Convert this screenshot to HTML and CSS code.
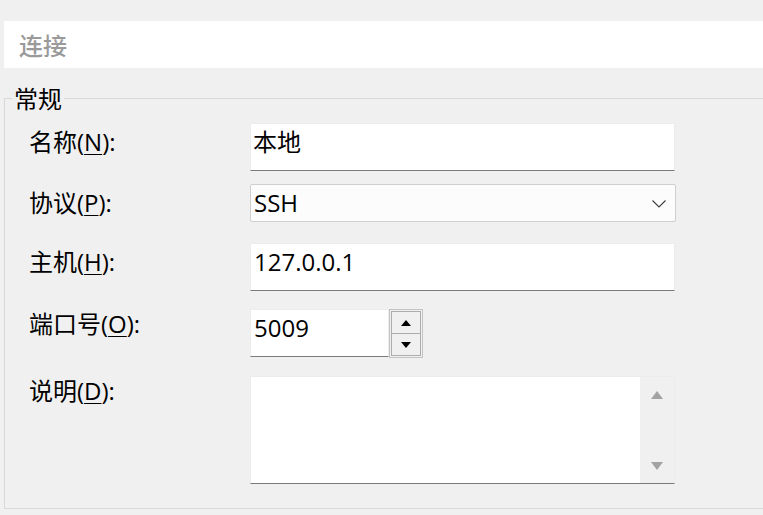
FILE: index.html
```html
<!DOCTYPE html>
<html lang="zh-CN">
<head>
<meta charset="utf-8">
<title>连接</title>
<link rel="stylesheet" href="styles.css">
</head>
<body>
<div class="header">连接</div>
<fieldset class="group">
  <legend class="legend">常规</legend>
  <div class="form">
    <div class="row row-name">
      <label class="label label-a">名称(<u>N</u>):</label>
      <div class="textbox tall"><span class="value cjk-value">本地</span></div>
    </div>
    <div class="row row-proto">
      <label class="label label-b">协议(<u>P</u>):</label>
      <div class="combo">
        <span class="value">SSH</span>
        <svg class="chev" width="14" height="8" viewBox="0 0 14 8"><path d="M0.5 0.5 L7 7 L13.5 0.5" fill="none" stroke="#3c3c3c" stroke-width="1.1"/></svg>
      </div>
    </div>
    <div class="row row-host">
      <label class="label label-a">主机(<u>H</u>):</label>
      <div class="textbox tall"><span class="value">127.0.0.1</span></div>
    </div>
    <div class="row row-port">
      <label class="label label-c">端口号(<u>O</u>):</label>
      <div class="spin-wrap">
        <div class="textbox port"><span class="value">5009</span></div>
        <div class="spin">
          <div class="spin-btn"><span class="tri tri-up"></span></div>
          <div class="spin-btn"><span class="tri tri-down"></span></div>
        </div>
      </div>
    </div>
    <div class="row row-desc">
      <label class="label label-c">说明(<u>D</u>):</label>
      <div class="memo">
        <div class="memo-text"></div>
        <div class="scroll">
          <span class="stri stri-up"></span>
          <span class="stri stri-down"></span>
        </div>
      </div>
    </div>
  </div>
</fieldset>
</body>
</html>
```
FILE: styles.css
```css
html, body {
  margin: 0;
  padding: 0;
}
body {
  width: 763px;
  height: 515px;
  overflow: hidden;
  background: #f0f0f0;
  font-family: "Open Sans", "Noto Sans CJK SC", sans-serif;
  font-size: 24px;
  color: #000;
}
.header {
  margin: 21px 0 0 4px;
  height: 47px;
  line-height: 47px;
  background: #fff;
  color: #9a9a9a;
  padding-left: 15px;
  font-family: "Noto Sans CJK SC", sans-serif;
  font-weight: 500;
}
.group {
  margin: 17px 0 0 4px;
  padding: 0;
  border: 1px solid #d9d9d9;
  border-right: none;
  min-width: 0;
}
.legend {
  margin-left: 7px;
  padding: 0 2px;
  line-height: 26px;
  font-family: "Noto Sans CJK SC", sans-serif;
}
.form {
  display: flex;
  flex-direction: column;
  padding: 12px 0 24px 24px;
}
.row {
  display: flex;
  align-items: flex-start;
}
.row-proto { margin-top: 13px; }
.row-host { margin-top: 21px; }
.row-port { margin-top: 18px; }
.row-desc { margin-top: 18px; }
.label {
  width: 221px;
  flex: none;
  line-height: 30px;
  white-space: nowrap;
}
.label u {
  text-underline-offset: 3px;
  text-decoration-thickness: 1px;
}
.label-a { padding-top: 4px; }
.label-b { padding-top: 4px; }
.label-c { padding-top: 0px; }
.textbox {
  box-sizing: border-box;
  background: #fff;
  border: 1px solid #ececec;
  border-bottom: 1px solid #7a7a7a;
  padding: 3px 0 0 3px;
  line-height: 30px;
}
.tall {
  width: 425px;
  height: 48px;
}
.cjk-value {
  margin-left: -1px;
}
.combo {
  box-sizing: border-box;
  width: 426px;
  height: 38px;
  background: #fcfcfc;
  border: 1px solid #cfcfcf;
  border-radius: 2px;
  display: flex;
  align-items: center;
  justify-content: space-between;
  padding: 0 9px 0 3px;
  line-height: 30px;
}
.chev {
  display: block;
  margin-top: 2px;
}
.spin-wrap {
  display: flex;
  align-items: flex-start;
}
.port {
  width: 139px;
  height: 48px;
}
.spin {
  box-sizing: border-box;
  width: 34px;
  height: 49px;
  border: 1px solid #c4c4c4;
  padding: 1px;
  display: flex;
  flex-direction: column;
}
.spin-btn {
  flex: 1;
  background: #f0f0f0;
  border: 1px solid #adadad;
  display: flex;
  align-items: center;
  justify-content: center;
}
.spin-btn + .spin-btn {
  border-top: none;
}
.tri {
  width: 0;
  height: 0;
  border-left: 5px solid transparent;
  border-right: 5px solid transparent;
}
.tri-up { border-bottom: 6px solid #000; }
.tri-down { border-top: 6px solid #000; }
.memo {
  box-sizing: border-box;
  width: 425px;
  height: 108px;
  background: #fff;
  border: 1px solid #ececec;
  border-bottom: 1px solid #7a7a7a;
  display: flex;
}
.memo-text {
  flex: 1;
}
.scroll {
  width: 34px;
  background: #f0f0f0;
  display: flex;
  flex-direction: column;
  align-items: center;
  justify-content: space-between;
  padding: 14px 0 13px;
}
.stri {
  width: 0;
  height: 0;
  border-left: 6px solid transparent;
  border-right: 6px solid transparent;
}
.stri-up { border-bottom: 8px solid #a3a3a3; }
.stri-down { border-top: 8px solid #a3a3a3; }
```
